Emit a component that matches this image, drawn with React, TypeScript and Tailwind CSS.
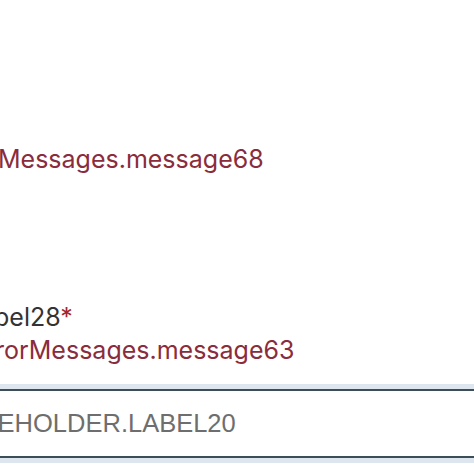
export default function App() {
  return (
    <div className="w-[474px] h-[474px] overflow-hidden bg-white">
      <div className="flex flex-col pt-[143px] font-['Inter',sans-serif] text-[25px] leading-[33px]">
        {/* first field error */}
        <p className="whitespace-nowrap -ml-[2px] text-[#8a2c3c]">Messages.message68</p>

        {/* second field */}
        <div className="mt-[125px] flex flex-col">
          <label className="whitespace-nowrap -ml-[6px] text-[#333333]">
            bel28<span className="text-[#a4262c]">*</span>
          </label>
          <p className="whitespace-nowrap -ml-[5px] text-[#8a2c3c]">rorMessages.message63</p>
          <input
            readOnly
            placeholder="PLACEHOLDER.LABEL20"
            className="mt-[22px] -ml-[84px] w-[640px] h-[69px] shrink-0 border-2 border-[#3c4d58] bg-white pl-[13px] font-['Liberation_Sans',Arial,sans-serif] text-[25.5px] text-[#6e6e6e] placeholder:text-[#6e6e6e] shadow-[0_0_0_5px_#dde6ee] outline-none"
          />
        </div>
      </div>
    </div>
  )
}
